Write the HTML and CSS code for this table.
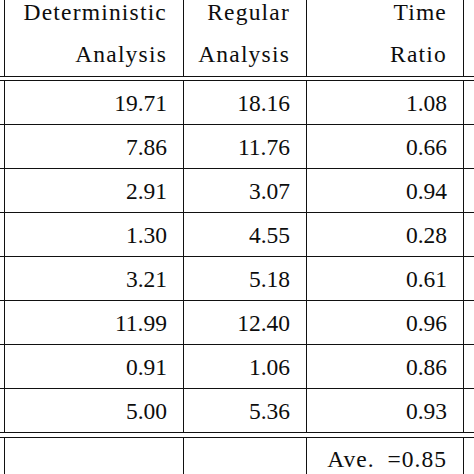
FILE: index.html
```html
<!DOCTYPE html>
<html>
<head>
<meta charset="utf-8">
<link rel="stylesheet" href="styles.css">
</head>
<body>
<div class="table">
  <div class="row head">
    <div class="cell edge"></div>
    <div class="cell"><span class="l1">Deterministic</span><span class="l2">Analysis</span></div>
    <div class="cell"><span class="l1">Regular</span><span class="l2">Analysis</span></div>
    <div class="cell"><span class="l1">Time</span><span class="l2">Ratio</span></div>
    <div class="cell edge"></div>
  </div>
  <div class="gap"></div>
  <div class="body">
    <div class="row"><div class="cell edge"></div><div class="cell">19.71</div><div class="cell">18.16</div><div class="cell">1.08</div><div class="cell edge"></div></div>
    <div class="row"><div class="cell edge"></div><div class="cell">7.86</div><div class="cell">11.76</div><div class="cell">0.66</div><div class="cell edge"></div></div>
    <div class="row"><div class="cell edge"></div><div class="cell">2.91</div><div class="cell">3.07</div><div class="cell">0.94</div><div class="cell edge"></div></div>
    <div class="row"><div class="cell edge"></div><div class="cell">1.30</div><div class="cell">4.55</div><div class="cell">0.28</div><div class="cell edge"></div></div>
    <div class="row"><div class="cell edge"></div><div class="cell">3.21</div><div class="cell">5.18</div><div class="cell">0.61</div><div class="cell edge"></div></div>
    <div class="row"><div class="cell edge"></div><div class="cell">11.99</div><div class="cell">12.40</div><div class="cell">0.96</div><div class="cell edge"></div></div>
    <div class="row"><div class="cell edge"></div><div class="cell">0.91</div><div class="cell">1.06</div><div class="cell">0.86</div><div class="cell edge"></div></div>
    <div class="row"><div class="cell edge"></div><div class="cell">5.00</div><div class="cell">5.36</div><div class="cell">0.93</div><div class="cell edge"></div></div>
  </div>
  <div class="gap"></div>
  <div class="row foot"><div class="cell edge"></div><div class="cell"></div><div class="cell"></div><div class="cell"><span class="ave">Ave.</span>=0.85</div><div class="cell edge"></div></div>
</div>
</body>
</html>
```
FILE: styles.css
```css
html, body {
  margin: 0;
  padding: 0;
  background: #ffffff;
  width: 474px;
  height: 474px;
  overflow: hidden;
}
.table {
  width: 474px;
  font-family: "Liberation Serif", "Times New Roman", serif;
  font-size: 23.5px;
  color: #0d0d0d;
}
.row {
  display: grid;
  grid-template-columns: 4px 179px 123px 157px 11px;
  box-sizing: border-box;
}
.cell {
  text-align: right;
  padding-right: 16px;
  border-left: 1.5px solid #111111;
  white-space: nowrap;
}
.cell.edge {
  padding-right: 0;
}
.row .cell:first-child {
  border-left: none;
}
.head {
  height: 76.5px;
  border-bottom: 1.5px solid #111111;
}
.head .cell {
  letter-spacing: 1.2px;
}
.l1 {
  display: block;
  line-height: 24px;
}
.l2 {
  display: block;
  line-height: 43px;
  padding-top: 8.5px;
}
.gap {
  height: 3.5px;
}
.body .row,
.foot {
  border-top: 1.5px solid #111111;
  height: 44px;
}
.body .row .cell,
.foot .cell {
  line-height: 41px;
  padding-top: 1.5px;
}
.body {
  border-bottom: 1.5px solid #111111;
}
.foot .cell {
  letter-spacing: 1px;
}
.ave {
  margin-right: 13px;
}
```
